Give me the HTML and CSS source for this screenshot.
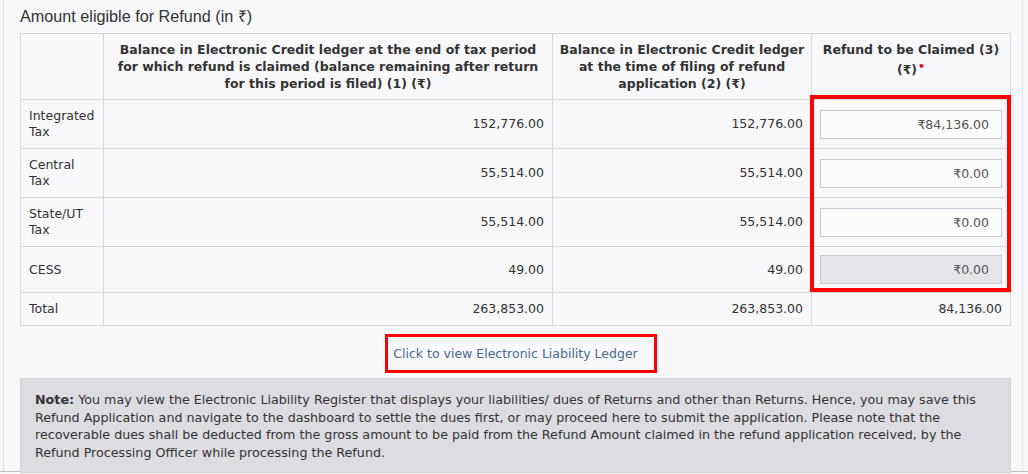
FILE: index.html
```html
<!DOCTYPE html>
<html>
<head>
<meta charset="utf-8">
<link rel="stylesheet" href="styles.css">
</head>
<body>
<div class="page">
  <div class="panel">
    <h4 class="title">Amount eligible for Refund (in ₹)</h4>
    <table class="grid">
      <colgroup>
        <col class="c-label">
        <col class="c-one">
        <col class="c-two">
        <col class="c-three">
      </colgroup>
      <thead>
        <tr>
          <th></th>
          <th>Balance in Electronic Credit ledger at the end of tax period<br>for which refund is claimed (balance remaining after return<br>for this period is filed) (1) (₹)</th>
          <th>Balance in Electronic Credit ledger<br>at the time of filing of refund<br>application (2) (₹)</th>
          <th>Refund to be Claimed (3)<br>(₹)<span class="req">•</span></th>
        </tr>
      </thead>
      <tbody>
        <tr>
          <td>Integrated<br>Tax</td>
          <td class="num">152,776.00</td>
          <td class="num">152,776.00</td>
          <td><div class="amount">₹84,136.00</div></td>
        </tr>
        <tr>
          <td>Central<br>Tax</td>
          <td class="num">55,514.00</td>
          <td class="num">55,514.00</td>
          <td><div class="amount">₹0.00</div></td>
        </tr>
        <tr>
          <td>State/UT<br>Tax</td>
          <td class="num">55,514.00</td>
          <td class="num">55,514.00</td>
          <td><div class="amount">₹0.00</div></td>
        </tr>
        <tr>
          <td>CESS</td>
          <td class="num">49.00</td>
          <td class="num">49.00</td>
          <td><div class="amount disabled">₹0.00</div></td>
        </tr>
        <tr>
          <td>Total</td>
          <td class="num">263,853.00</td>
          <td class="num">263,853.00</td>
          <td class="num">84,136.00</td>
        </tr>
      </tbody>
    </table>
    <div class="link-row"><a class="ledger-link">Click to view Electronic Liability Ledger</a></div>
    <div class="note"><b>Note:</b> You may view the Electronic Liability Register that displays your liabilities/ dues of Returns and other than Returns. Hence, you may save this<br>Refund Application and navigate to the dashboard to settle the dues first, or may proceed here to submit the application. Please note that the<br>recoverable dues shall be deducted from the gross amount to be paid from the Refund Amount claimed in the refund application received, by the<br>Refund Processing Officer while processing the Refund.</div>
  </div>
</div>
<div class="highlight"></div>
</body>
</html>
```
FILE: styles.css
```css
html, body {
  margin: 0;
  padding: 0;
  background: #f8f8fa;
}
body {
  font-family: "DejaVu Sans", Verdana, sans-serif;
  font-size: 12.5px;
  color: #333;
  position: relative;
  width: 1028px;
  height: 474px;
  overflow: hidden;
}
.page {
  height: 471px;
  border-bottom: 1px solid #bdbdc2;
}
.panel {
  margin-left: 3px;
  width: 991px;
  height: 471px;
  padding: 0 11px 0 16px;
  border-left: 1px solid #dcdce0;
  border-right: 1px solid #e4e4e8;
}
.title {
  margin: 0 0 7px 0;
  padding-top: 6px;
  font-family: "Liberation Sans", Arial, sans-serif;
  font-weight: normal;
  font-size: 16.2px;
  line-height: 20px;
  color: #333;
}
.grid {
  border-collapse: collapse;
  width: 990px;
  table-layout: fixed;
  border: 1px solid #d8d8dc;
}
.c-label { width: 83px; }
.c-one { width: 449px; }
.c-two { width: 259px; }
.c-three { width: 199px; }
.grid th {
  border: 1px solid #d8d8dc;
  padding: 7px 4px 7px;
  line-height: 17px;
  font-weight: bold;
  text-align: center;
  vertical-align: top;
  white-space: nowrap;
  color: #333;
}
.grid td {
  border: 1px solid #d8d8dc;
  padding: 8px;
  line-height: 16px;
  vertical-align: middle;
  color: #333;
}
.grid td.num {
  text-align: right;
}
.req {
  color: #e2001a;
  font-size: 11px;
  vertical-align: 4px;
  margin-left: 1px;
}
.amount {
  box-sizing: border-box;
  height: 29px;
  width: 100%;
  border: 1px solid #c9c9d2;
  background: #fbfbfc;
  color: #555;
  text-align: right;
  padding: 6px 12px 0 0;
}
.amount.disabled {
  background: #e6e6ea;
}
.link-row {
  margin-top: 8px;
  text-align: center;
}
.ledger-link {
  display: inline-block;
  margin-left: 11px;
  border: 3px solid #f00;
  padding: 8px 16px 8px 5px;
  line-height: 17px;
  color: #4a6a90;
  font-size: 12.5px;
  text-decoration: none;
}
.note {
  margin-top: 5px;
  background: #dcdce1;
  border: 1px solid #d2d2d8;
  padding: 12px 14px 11px;
  font-size: 12.7px;
  line-height: 17.5px;
  color: #333;
  white-space: nowrap;
}
.note b {
  font-weight: bold;
}
.highlight {
  position: absolute;
  left: 810px;
  top: 95px;
  width: 201px;
  height: 197px;
  box-sizing: border-box;
  border: 4px solid #f00;
}
```
